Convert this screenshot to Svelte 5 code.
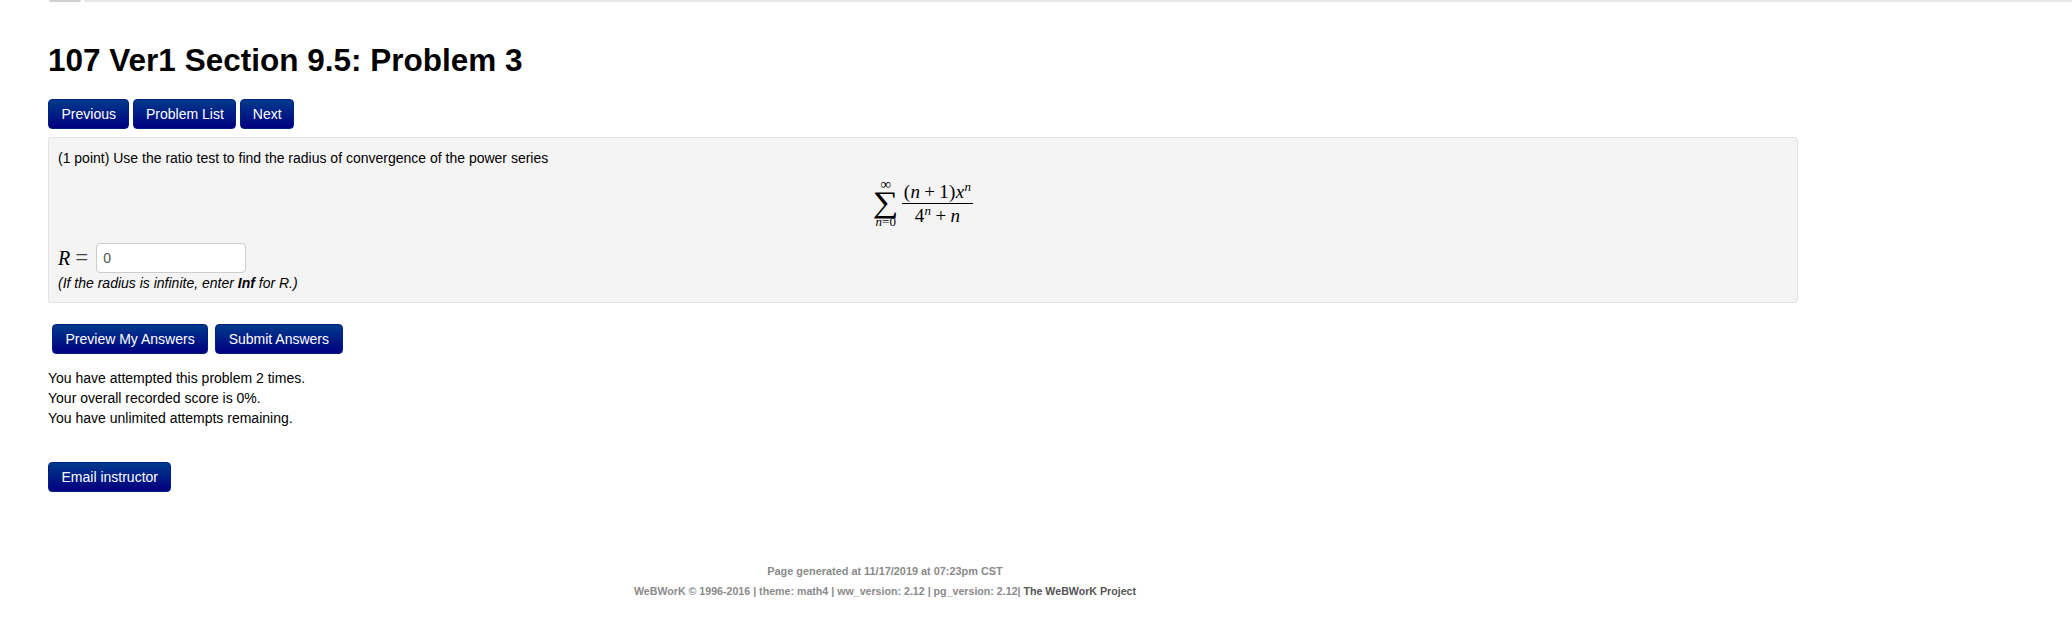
<script>
    const navButtons = ['Previous', 'Problem List', 'Next'];
    const attemptLines = [
        'You have attempted this problem 2 times.',
        'Your overall recorded score is 0%.',
        'You have unlimited attempts remaining.'
    ];
</script>

<div class="topbar">
    <span class="tab"></span>
    <span class="rule"></span>
</div>

<main class="content">
    <h1>107 Ver1 Section 9.5: Problem 3</h1>

    <div class="nav">
        {#each navButtons as label}
            <button class="btn">{label}</button>
        {/each}
    </div>

    <section class="problem">
        <p class="intro">(1 point) Use the ratio test to find the radius of convergence of the power series</p>

        <div class="display-math">
            <span class="sum">
                <span class="limit inf">∞</span>
                <span class="sigma">∑</span>
                <span class="limit"><i>n</i>=0</span>
            </span>
            <span class="frac">
                <span class="num">(<i>n</i><span class="op">+</span>1)<i>x</i><sup><i>n</i></sup></span>
                <span class="den">4<sup><i>n</i></sup><span class="op">+</span><i>n</i></span>
            </span>
        </div>

        <div class="answer">
            <span class="var"><i>R</i><span class="eq">=</span></span>
            <input type="text" value="0" />
        </div>
        <p class="hint">(If the radius is infinite, enter <b>Inf</b> for R.)</p>
    </section>

    <div class="submit">
        <button class="btn">Preview My Answers</button>
        <button class="btn">Submit Answers</button>
    </div>

    <div class="attempts">
        {#each attemptLines as line}
            <div>{line}</div>
        {/each}
    </div>

    <button class="btn email">Email instructor</button>
</main>

<footer>
    <div class="generated">Page generated at 11/17/2019 at 07:23pm CST</div>
    <div class="versions">WeBWorK © 1996-2016 | theme: math4 | ww_version: 2.12 | pg_version: 2.12| <span class="project">The WeBWorK Project</span></div>
</footer>

<style>
    :global(body) {
        margin: 0;
        background: #fff;
        color: #000;
        font-family: "Liberation Sans", Arial, sans-serif;
        font-size: 14px;
    }
    .topbar {
        display: flex;
        height: 3px;
        padding-left: 49px;
        gap: 3px;
    }
    .tab {
        width: 32px;
        height: 2px;
        background: #cfcfcf;
        border-radius: 0 0 3px 3px;
    }
    .rule {
        flex: 1;
        height: 2px;
        background: #e8e8e8;
    }
    .content {
        padding: 0 48px;
    }
    h1 {
        margin: 0;
        padding: 39px 0 0 0;
        font-size: 31.5px;
        line-height: 36px;
        font-weight: bold;
    }
    .nav {
        display: flex;
        gap: 4px;
        margin-top: 21px;
    }
    .btn {
        box-sizing: border-box;
        height: 30px;
        padding: 0 12.5px;
        border: 1px solid #00207f;
        border-radius: 4px;
        background: linear-gradient(to bottom, #003a8c, #00007f);
        color: #fff;
        font: 14px/20px "Liberation Sans", Arial, sans-serif;
    }
    .nav .btn:not(:first-child) {
        padding: 0 11.5px;
    }
    .problem {
        box-sizing: border-box;
        width: 1750px;
        margin-top: 8px;
        padding: 10px 9px 9px;
        background: #f4f4f4;
        border: 1px solid #e3e3e3;
        border-radius: 3px;
    }
    .intro, .hint {
        margin: 0;
        line-height: 20px;
    }
    .display-math {
        display: flex;
        justify-content: center;
        align-items: center;
        gap: 3px;
        height: 71px;
        font-family: "Liberation Serif", "DejaVu Serif", serif;
        font-size: 19px;
    }
    .sum {
        display: flex;
        flex-direction: column;
        align-items: center;
        width: 26px;
    }
    .sigma {
        font-size: 30px;
        line-height: 25px;
        height: 27px;
        transform: scaleX(1.2);
    }
    .limit {
        font-size: 13px;
        line-height: 11px;
    }
    .limit.inf {
        font-size: 15px;
        line-height: 9px;
    }
    .frac {
        display: flex;
        flex-direction: column;
        align-items: center;
        letter-spacing: 0.3px;
    }
    .num {
        padding: 0 2px 1px;
        border-bottom: 1px solid #000;
        line-height: 20px;
    }
    .den {
        padding-top: 2px;
        line-height: 20px;
    }
    .op {
        margin: 0 4px;
    }
    sup {
        font-size: 13px;
        line-height: 0;
    }
    .answer {
        display: flex;
        align-items: center;
        gap: 8px;
        margin-top: 4px;
    }
    .var {
        display: flex;
        align-items: center;
        gap: 5px;
        font-family: "Liberation Serif", "DejaVu Serif", serif;
        font-size: 20px;
    }
    .eq {
        color: #444;
        font-size: 23px;
        line-height: 20px;
    }
    input {
        box-sizing: border-box;
        width: 150px;
        height: 30px;
        padding: 0 6px;
        border: 1px solid #ccc;
        border-radius: 4px;
        background: #fff;
        color: #555;
        font: 14px "Liberation Sans", Arial, sans-serif;
    }
    .hint {
        font-style: italic;
    }
    .submit {
        display: flex;
        gap: 7px;
        margin-top: 21px;
        padding-left: 4px;
    }
    .attempts {
        margin-top: 14px;
        line-height: 20px;
    }
    .email {
        display: block;
        margin-top: 34px;
    }
    footer {
        margin-top: 69px;
        text-align: center;
        width: 1770px;
        font-weight: bold;
        line-height: 20px;
        color: #8a8a8a;
    }
    .generated {
        font-size: 10.9px;
    }
    .versions {
        font-size: 10.65px;
    }
    .project {
        color: #555;
    }
</style>
